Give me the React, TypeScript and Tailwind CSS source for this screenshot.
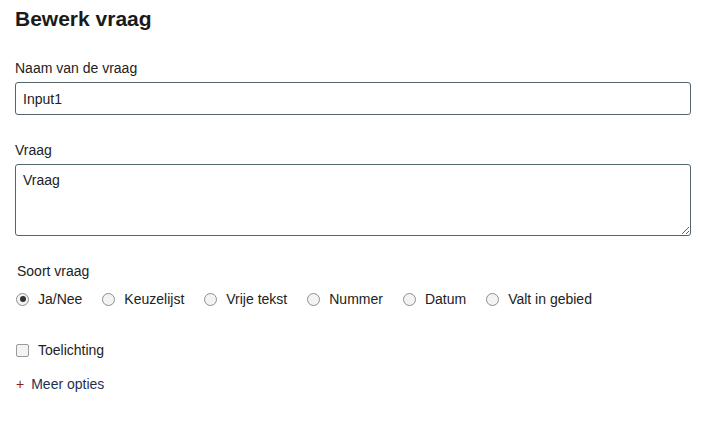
import { useState } from "react";

const SOORTEN = ["Ja/Nee", "Keuzelijst", "Vrije tekst", "Nummer", "Datum", "Valt in gebied"];

const Radio = ({ checked }: { checked: boolean }) => (
  <span className="flex h-[13px] w-[13px] shrink-0 items-center justify-center rounded-full border-[1.5px] border-[#8f8f8f] bg-[#f3f3f3]">
    {checked && <span className="h-[6px] w-[6px] rounded-full bg-[#333333]" />}
  </span>
);

const EditQuestion = () => {
  const [soort, setSoort] = useState("Ja/Nee");
  const [toelichting, setToelichting] = useState(false);

  return (
    <div className="min-h-screen bg-white px-[15px] pt-[5px] font-['Liberation_Sans',Arial,sans-serif] text-[14px] text-[#222222]">
      <h1 className="text-[21px] font-bold leading-[28px] text-[#1a1a1a]">Bewerk vraag</h1>

      <label className="mt-[25px] block leading-[20px]">Naam van de vraag</label>
      <input
        defaultValue="Input1"
        className="mt-[4px] block h-[33px] w-[676px] rounded-[3px] border border-[#53656d] px-[7px] leading-[20px] text-[#222222] outline-none"
      />

      <label className="mt-[25px] block leading-[20px]">Vraag</label>
      <textarea
        defaultValue="Vraag"
        className="mt-[4px] block h-[72px] w-[676px] rounded-[3px] border border-[#53656d] px-[7px] pt-[5px] leading-[20px] text-[#222222] outline-none"
      />

      <div className="mt-[25px] pl-[2px] leading-[20px]">Soort vraag</div>
      <div className="mt-[8px] flex items-center gap-[20px] pl-[1px]">
        {SOORTEN.map((s) => (
          <button
            key={s}
            type="button"
            onClick={() => setSoort(s)}
            className="flex items-center gap-[9px] leading-[20px]"
          >
            <Radio checked={soort === s} />
            <span>{s}</span>
          </button>
        ))}
      </div>

      <button
        type="button"
        onClick={() => setToelichting(!toelichting)}
        className="mt-[31px] flex items-center gap-[9px] pl-[1px] leading-[20px]"
      >
        <span className="flex h-[13px] w-[13px] items-center justify-center rounded-[2px] border border-[#9a9a9a] bg-[#f3f3f3] text-[10px]">
          {toelichting ? "✓" : ""}
        </span>
        <span>Toelichting</span>
      </button>

      <button type="button" className="mt-[14px] flex items-center gap-[7px] pl-[1px] leading-[20px]">
        <span className="text-[14px] text-[#8b1c1c]">+</span>
        <span className="text-[#1f2f52]">Meer opties</span>
      </button>
    </div>
  );
};

export default function App() {
  return <EditQuestion />;
}
